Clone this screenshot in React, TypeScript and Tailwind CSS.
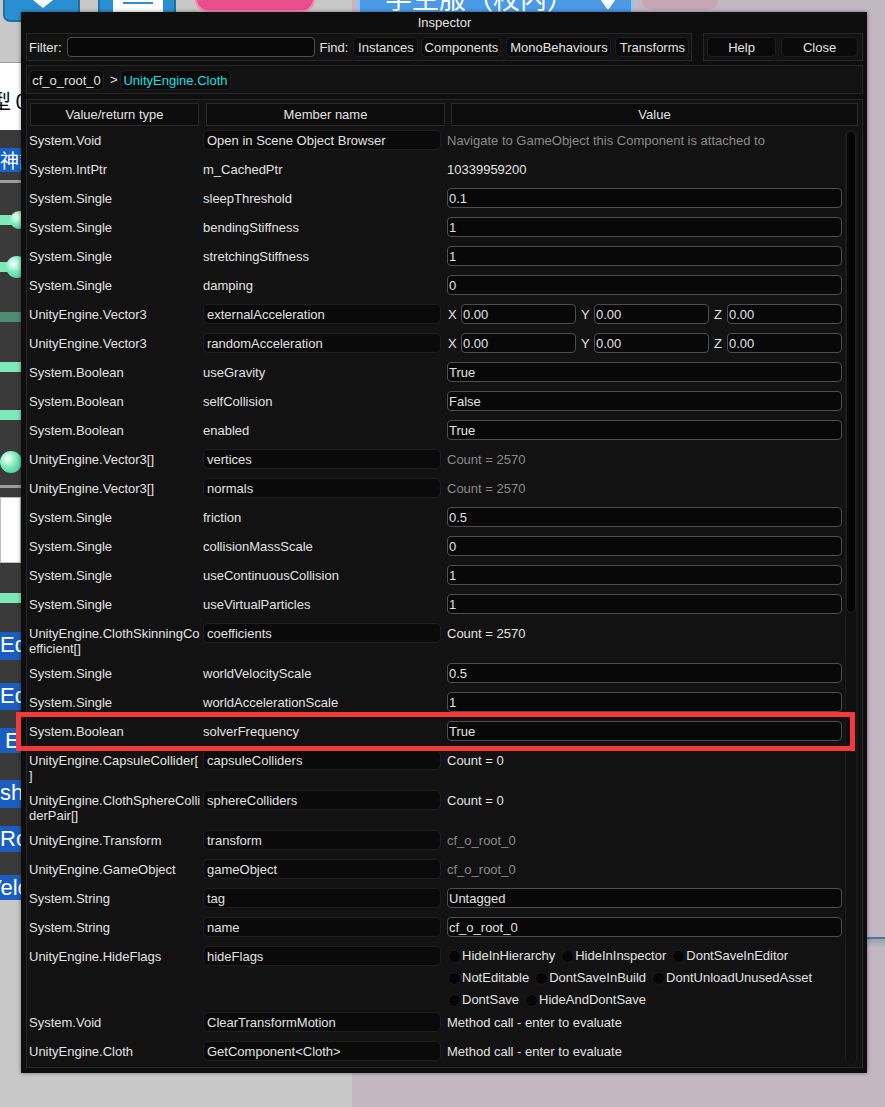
import React from "react";
import clsx from "clsx";

type Value =
  | { kind: "text"; text: string; dim?: boolean }
  | { kind: "input"; text: string }
  | { kind: "vector" }
  | { kind: "flags" };

interface MemberRow {
  type: string;
  member: string;
  button?: boolean;
  value: Value;
  size?: "double" | "flags";
}

const txt = (text: string, dim = false): Value => ({ kind: "text", text, dim });
const inp = (text: string): Value => ({ kind: "input", text });

const rows: MemberRow[] = [
  { type: "System.Void", member: "Open in Scene Object Browser", button: true, value: txt("Navigate to GameObject this Component is attached to", true) },
  { type: "System.IntPtr", member: "m_CachedPtr", value: txt("10339959200") },
  { type: "System.Single", member: "sleepThreshold", value: inp("0.1") },
  { type: "System.Single", member: "bendingStiffness", value: inp("1") },
  { type: "System.Single", member: "stretchingStiffness", value: inp("1") },
  { type: "System.Single", member: "damping", value: inp("0") },
  { type: "UnityEngine.Vector3", member: "externalAcceleration", button: true, value: { kind: "vector" } },
  { type: "UnityEngine.Vector3", member: "randomAcceleration", button: true, value: { kind: "vector" } },
  { type: "System.Boolean", member: "useGravity", value: inp("True") },
  { type: "System.Boolean", member: "selfCollision", value: inp("False") },
  { type: "System.Boolean", member: "enabled", value: inp("True") },
  { type: "UnityEngine.Vector3[]", member: "vertices", button: true, value: txt("Count = 2570", true) },
  { type: "UnityEngine.Vector3[]", member: "normals", button: true, value: txt("Count = 2570", true) },
  { type: "System.Single", member: "friction", value: inp("0.5") },
  { type: "System.Single", member: "collisionMassScale", value: inp("0") },
  { type: "System.Single", member: "useContinuousCollision", value: inp("1") },
  { type: "System.Single", member: "useVirtualParticles", value: inp("1") },
  { type: "UnityEngine.ClothSkinningCo\nefficient[]", member: "coefficients", button: true, value: txt("Count = 2570"), size: "double" },
  { type: "System.Single", member: "worldVelocityScale", value: inp("0.5") },
  { type: "System.Single", member: "worldAccelerationScale", value: inp("1") },
  { type: "System.Boolean", member: "solverFrequency", value: inp("True") },
  { type: "UnityEngine.CapsuleCollider[\n]", member: "capsuleColliders", button: true, value: txt("Count = 0"), size: "double" },
  { type: "UnityEngine.ClothSphereColli\nderPair[]", member: "sphereColliders", button: true, value: txt("Count = 0"), size: "double" },
  { type: "UnityEngine.Transform", member: "transform", button: true, value: txt("cf_o_root_0", true) },
  { type: "UnityEngine.GameObject", member: "gameObject", button: true, value: txt("cf_o_root_0", true) },
  { type: "System.String", member: "tag", button: true, value: inp("Untagged") },
  { type: "System.String", member: "name", button: true, value: inp("cf_o_root_0") },
  { type: "UnityEngine.HideFlags", member: "hideFlags", button: true, value: { kind: "flags" }, size: "flags" },
  { type: "System.Void", member: "ClearTransformMotion", button: true, value: txt("Method call - enter to evaluate") },
  { type: "UnityEngine.Cloth", member: "GetComponent<Cloth>", button: true, value: txt("Method call - enter to evaluate") },
];

const flags = [
  "HideInHierarchy",
  "HideInInspector",
  "DontSaveInEditor",
  "NotEditable",
  "DontSaveInBuild",
  "DontUnloadUnusedAsset",
  "DontSave",
  "HideAndDontSave",
];

function Btn({ children, className }: { children: React.ReactNode; className?: string }) {
  return (
    <div
      className={clsx(
        "flex h-[20px] shrink-0 items-center justify-center rounded-[5px] border border-[#1e1e1e] bg-[#0a0a0a] pt-[1px] leading-[17px]",
        className
      )}
    >
      {children}
    </div>
  );
}

function Field({ text, className }: { text?: string; className?: string }) {
  return (
    <div
      className={clsx(
        "h-[20px] overflow-hidden whitespace-nowrap rounded-[4px] border border-[#4d4d4d] bg-[#080808] pl-[1px] pt-[1px] leading-[17px]",
        className
      )}
    >
      {text}
    </div>
  );
}

function ValueCell({ value }: { value: Value }) {
  if (value.kind === "text") {
    return (
      <div className={clsx("whitespace-nowrap pt-[3px] leading-[15px]", value.dim && "text-[#8a8a8a]")}>
        {value.text}
      </div>
    );
  }
  if (value.kind === "input") return <Field text={value.text} />;
  if (value.kind === "vector") {
    return (
      <div className="flex gap-[4px]">
        {["X", "Y", "Z"].map((axis) => (
          <div key={axis} className="flex flex-1">
            <span className="w-[14px] shrink-0 pl-[1px] pt-[1px] leading-[20px]">{axis}</span>
            <Field text="0.00" className="flex-1" />
          </div>
        ))}
      </div>
    );
  }
  return (
    <div className="-mt-px flex flex-wrap leading-[22px]">
      {flags.map((f) => (
        <div key={f} className="mr-[5px] flex items-center">
          <span className="ml-[1px] h-[13px] w-[13px] rounded-full border border-[#1a1a1a] bg-[#060606]" />
          <span className="ml-[1px]">{f}</span>
        </div>
      ))}
    </div>
  );
}

function Row({ row }: { row: MemberRow }) {
  return (
    <div
      className={clsx(
        "grid shrink-0 grid-cols-[174px_244px_395px] items-start",
        row.size === "double" ? "h-[40px]" : row.size === "flags" ? "h-[66px]" : "h-[29px]"
      )}
    >
      <div className="whitespace-pre-line pt-[3px] leading-[15px]">{row.type}</div>
      {row.button ? (
        <div className="flex h-[20px] w-[238px] items-center overflow-hidden whitespace-nowrap rounded-[5px] border border-[#1e1e1e] bg-[#0a0a0a] pl-[3px] pt-[1px]">
          {row.member}
        </div>
      ) : (
        <div className="pt-[3px] leading-[15px]">{row.member}</div>
      )}
      <ValueCell value={row.value} />
    </div>
  );
}

function Backdrop() {
  const bars = [
    { top: "top-[215px]", w: "w-[16px]", c: "bg-[#7de8b8]" },
    { top: "top-[262px]", w: "w-[12px]", c: "bg-[#7de8b8]" },
    { top: "top-[312px]", w: "w-[21px]", c: "bg-[#4e8c74]" },
    { top: "top-[362px]", w: "w-[21px]", c: "bg-[#7de8b8]" },
    { top: "top-[410px]", w: "w-[21px]", c: "bg-[#7de8b8]" },
    { top: "top-[593px]", w: "w-[21px]", c: "bg-[#7de8b8]" },
  ];
  const labels = [
    { top: "top-[632px]", h: "h-[28px]", text: "Edit", pad: "pl-[0px]" },
    { top: "top-[683px]", h: "h-[27px]", text: "Edit", pad: "pl-[0px]" },
    { top: "top-[728px]", h: "h-[25px]", text: "Ex", pad: "pl-[5px]" },
    { top: "top-[780px]", h: "h-[28px]", text: "sh", pad: "pl-[0px]" },
    { top: "top-[826px]", h: "h-[26px]", text: "Ro", pad: "pl-[0px]" },
    { top: "top-[875px]", h: "h-[25px]", text: "Velo", pad: "-ml-[13px]" },
  ];
  return (
    <>
      <div className="absolute left-0 top-0 h-[1107px] w-[352px] bg-[#c8c8c8]" />
      {/* top game buttons */}
      <div className="absolute -top-[10px] left-[3px] h-[32px] w-[77px] rounded-[7px] border-2 border-[#1f6fa8] bg-[#2a8fd2]" />
      <div className="absolute left-[33px] top-0 h-0 w-0 border-x-[10px] border-t-[8px] border-x-transparent border-t-white" />
      <div className="absolute -top-[10px] left-[98px] h-[32px] w-[78px] rounded-[7px] border-2 border-[#1f6fa8] bg-[#2a8fd2]" />
      <div className="absolute -top-[2px] left-[113px] h-[14px] w-[50px] bg-white" />
      <div className="absolute left-[123px] top-[2px] h-[2px] w-[30px] bg-[#2a8fd2]" />
      <div className="absolute -top-[14px] left-[195px] h-[26px] w-[120px] rounded-[13px] border-2 border-[#f58ab5] bg-[#e8508c]" />
      <div className="absolute -top-[4px] left-[358px] h-[18px] w-[275px] border-2 border-[#8cc4ff] bg-[#4a9ae6]" />
      <div className="absolute -top-[17px] left-[385px] font-['Noto_Sans_CJK_SC',sans-serif] text-[27px] leading-[30px] text-white">
        学生服（校内）
      </div>
      <div className="absolute -top-[4px] left-[598px] h-0 w-0 border-x-[10px] border-t-[14px] border-x-transparent border-t-white" />
      <div className="absolute -top-[10px] left-[642px] h-[20px] w-[76px] rounded-[10px] bg-[#c6a6b4]" />
      {/* left strip */}
      <div className="absolute left-0 top-[62px] h-[68px] w-[21px] border-t border-[#9a9a9a] bg-white" />
      <div className="absolute -left-[9px] top-[88px] font-['Noto_Sans_CJK_SC',sans-serif] text-[20px] leading-[26px] text-black">
        型 0
      </div>
      <div className="absolute left-0 top-[130px] h-[770px] w-[21px] bg-[#3a3a3a]" />
      <div className="absolute left-0 top-[148px] h-[24px] w-[21px] overflow-hidden bg-[#1462c6]">
        <span className="block whitespace-nowrap font-['Noto_Sans_CJK_SC',sans-serif] text-[19px] leading-[24px] text-white">神話</span>
      </div>
      <div className="absolute left-0 top-[180px] h-[3px] w-[21px] bg-[#9c9c9c]" />
      <div className="absolute left-0 top-[485px] h-[3px] w-[21px] bg-[#9c9c9c]" />
      {bars.map((b, i) => (
        <div key={i} className={clsx("absolute left-0 h-[10px]", b.top, b.w, b.c)} />
      ))}
      <div className="absolute left-[10px] top-[211px] h-[18px] w-[18px] rounded-full bg-[radial-gradient(circle_at_35%_35%,#ffffff,#74eab9_45%,#3cb68a)]" />
      <div className="absolute left-[6px] top-[256px] h-[22px] w-[22px] rounded-full bg-[radial-gradient(circle_at_35%_35%,#ffffff,#74eab9_45%,#3cb68a)]" />
      <div className="absolute left-0 top-[451px] h-[22px] w-[22px] rounded-full bg-[radial-gradient(circle_at_35%_35%,#ffffff,#74eab9_45%,#3cb68a)]" />
      <div className="absolute left-0 top-[497px] h-[66px] w-[21px] border border-[#bcbcbc] bg-white" />
      {labels.map((l, i) => (
        <div key={i} className={clsx("absolute left-0 w-[21px] overflow-hidden bg-[#1a5ec2]", l.top, l.h)}>
          <span className={clsx("block whitespace-nowrap text-[22px] leading-[26px] text-white", l.pad)}>{l.text}</span>
        </div>
      ))}
      {/* right strip detail */}
      <div className="absolute left-[867px] top-[937px] h-[12px] w-[18px] border-t-2 border-[#4f74a2] bg-gradient-to-b from-[#9aa3ab] to-[#c4bcc6]" />
    </>
  );
}

export default function App() {
  return (
    <div className="relative h-[1107px] w-[885px] overflow-hidden bg-[#c4b7c4] font-['Liberation_Sans',Arial,sans-serif] text-[13px] text-[#e2e2e2]">
      <Backdrop />

      <div className="absolute left-[21px] top-[12px] flex h-[1061px] w-[846px] flex-col bg-[#0e0e0e] pb-[5px] pl-[5px] pr-[4px] shadow-[0_0_4px_rgba(0,0,0,0.45)]">
        <div className="h-[21px] text-center leading-[21px]">Inspector</div>

        <div className="flex h-[28px] shrink-0 gap-[11px]">
          <div className="flex w-[666px] items-center border border-[#262626] bg-[#121212] pl-[2px]">
            <span className="pt-[1px]">Filter:</span>
            <Field className="ml-[5px] w-[248px] border-[#3c3c3c]" />
            <span className="ml-[5px] pt-[1px]">Find:</span>
            <Btn className="ml-[5px] w-[65px]">Instances</Btn>
            <Btn className="ml-[3px] w-[80px]">Components</Btn>
            <Btn className="ml-[5px] w-[105px]">MonoBehaviours</Btn>
            <Btn className="ml-[4px] w-[74px]">Transforms</Btn>
          </div>
          <div className="flex w-[160px] items-center gap-[5px] border border-[#262626] bg-[#121212] pl-[3px]">
            <Btn className="w-[69px]">Help</Btn>
            <Btn className="w-[77px]">Close</Btn>
          </div>
        </div>

        <div className="mt-[4px] flex h-[29px] shrink-0 items-center border border-[#262626] bg-[#121212] pl-[2px]">
          <Btn className="w-[75px]">cf_o_root_0</Btn>
          <span className="ml-[6px] w-[10px] pt-[1px]">&gt;</span>
          <Btn className="w-[111px] text-[#19e0e0]">UnityEngine.Cloth</Btn>
        </div>

        <div className="mt-[5px] flex min-h-0 flex-1 flex-col border border-[#262626] bg-[#121212]">
          <div className="flex shrink-0 gap-[7px] pl-[3px] pt-[3px]">
            <div className="h-[23px] w-[169px] border border-[#2a2a2a] bg-[#0c0c0c] text-center leading-[21px]">
              Value/return type
            </div>
            <div className="flex gap-[6px]">
              <div className="h-[23px] w-[239px] border border-[#2a2a2a] bg-[#0c0c0c] text-center leading-[21px]">
                Member name
              </div>
              <div className="h-[23px] w-[407px] border border-[#2a2a2a] bg-[#0c0c0c] text-center leading-[21px]">
                Value
              </div>
            </div>
          </div>

          <div className="mt-[4px] flex min-h-0 flex-1 gap-[3px] pl-[2px] pr-[5px]">
            <div className="flex w-[813px] flex-col overflow-hidden">
              {rows.map((r, i) => (
                <Row key={i} row={r} />
              ))}
            </div>
            <div className="mb-[1px] w-[12px] rounded-full border border-[#1c1c1c] bg-[#101010]">
              <div className="h-[482px] rounded-full border border-[#1f1f1f] bg-[#050505]" />
            </div>
          </div>
        </div>
      </div>

      {/* annotation over the solverFrequency row */}
      <div className="absolute left-[16px] top-[712px] h-[39px] w-[839px] border-[5px] border-[#f23a3a]" />
    </div>
  );
}
